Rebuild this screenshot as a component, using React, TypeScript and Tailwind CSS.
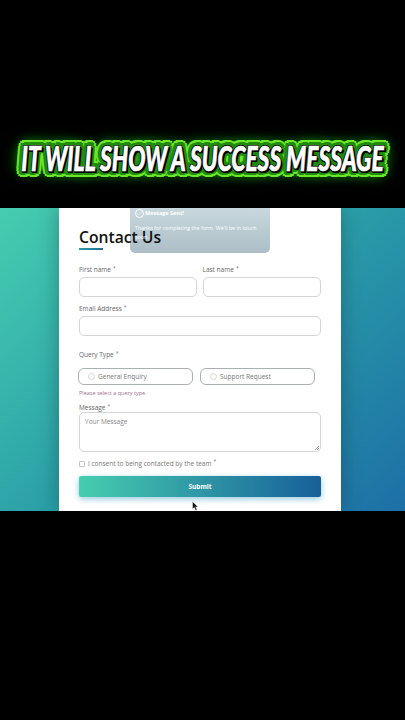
import { Check } from 'lucide-react';

// white letters, black edge, dark green fill, bright ring, then the glow
const OUTLINE =
  '[text-shadow:2px_1px_0_#000,3px_2px_0_#000,-1px_1px_0_#000,1px_-1px_0_#000,-1px_-1px_0_#000,0_2px_0_#000,6px_0_0_#1f8a0c,-6px_0_0_#1f8a0c,5px_3px_0_#1f8a0c,-5px_3px_0_#1f8a0c,5px_-3px_0_#1f8a0c,-5px_-3px_0_#1f8a0c,0_4px_0_#1f8a0c,0_-4px_0_#1f8a0c,3px_-4px_0_#1f8a0c,-3px_4px_0_#1f8a0c,9px_0_0_#6be82a,-9px_0_0_#6be82a,8px_3px_0_#6be82a,-8px_3px_0_#6be82a,8px_-3px_0_#6be82a,-8px_-3px_0_#6be82a,6px_5px_0_#6be82a,-6px_5px_0_#6be82a,6px_-5px_0_#6be82a,-6px_-5px_0_#6be82a,3px_6px_0_#6be82a,-3px_6px_0_#6be82a,3px_-6px_0_#6be82a,-3px_-6px_0_#6be82a,0_6px_0_#6be82a,0_-6px_0_#6be82a,0_0_14px_#39c80f,0_0_18px_#2fa80c,0_0_22px_#2fa80c,0_0_26px_#2fa80c]';

function Req() {
  return <sup className="ml-0.5 text-[5px] text-[#777]">*</sup>;
}

function Label({ children }: { children: React.ReactNode }) {
  return (
    <div className="h-[10px] text-[6.5px] leading-[10px] text-[#666]">
      {children}
      <Req />
    </div>
  );
}

function Field() {
  return <div className="mt-[2px] h-[20px] rounded-[5px] border border-[#d4d6d6] bg-white" />;
}

function Radio({ text }: { text: string }) {
  return (
    <div className="flex h-[17px] w-[115px] items-center rounded-[6px] border border-[#aab0b0] pl-[9px]">
      <span className="h-[7px] w-[7px] rounded-full border border-[#d4d8d8]" />
      <span className="ml-[3px] text-[6.5px] text-[#777]">{text}</span>
    </div>
  );
}

export default function App() {
  return (
    <div className="flex h-[720px] w-[405px] flex-col bg-black font-['Open_Sans',sans-serif]">
      <div className="flex h-[208px] items-end justify-center pb-[34px]">
        <div
          className={`origin-center scale-x-[0.66] whitespace-nowrap font-['Lato',sans-serif] text-[34.5px] leading-[32px] font-black italic text-white [-webkit-text-stroke:0.7px_white] ${OUTLINE}`}
        >
          IT WILL SHOW A SUCCESS MESSAGE
        </div>
      </div>

      <div className="relative flex h-[303px] overflow-hidden bg-[linear-gradient(135deg,#46cdb0_0%,#2a9ea8_50%,#1d6fa6_100%)]">
        <div className="ml-[59px] w-[282px] bg-white px-[20px] pt-[19px] shadow-[0_0_20px_rgba(0,0,0,0.28)]">
          <h1 className="relative z-10 text-[15.7px] leading-[20px] font-semibold text-[#111]">Contact Us</h1>
          <div className="mt-[1px] h-[2px] w-[24px] bg-[linear-gradient(90deg,#2a9ea8,#1d6f96)]" />

          <div className="mt-[15px] flex gap-[6px]">
            <div className="w-[118px]">
              <Label>First name</Label>
              <Field />
            </div>
            <div className="w-[119px]">
              <Label>Last name</Label>
              <Field />
            </div>
          </div>

          <div className="mt-[7px]">
            <Label>Email Address</Label>
            <Field />
          </div>

          <div className="mt-[14px]">
            <Label>Query Type</Label>
          </div>
          <div className="mt-[8px] -ml-px flex gap-[7px]">
            <Radio text="General Enquiry" />
            <Radio text="Support Request" />
          </div>
          <div className="mt-[4px] h-[9px] text-[5.5px] leading-[9px] text-[#a0708a]">Please select a query type.</div>

          <div className="mt-[5px]">
            <Label>Message</Label>
          </div>
          <div className="relative -mt-px h-[40px] rounded-[5px] border border-[#d4d6d6] px-[5px] py-[4px] text-[6.5px] leading-[10px] text-[#888]">
            Your Message
            <svg className="absolute right-px bottom-px h-[4px] w-[4px]" viewBox="0 0 4 4">
              <path d="M0 4 4 0M2 4 4 2" stroke="#555" strokeWidth="0.6" />
            </svg>
          </div>

          <div className="mt-[7px] flex h-[9px] items-center">
            <span className="h-[6px] w-[6px] rounded-[1px] border border-[#c4c8c8]" />
            <span className="ml-[3px] text-[6.5px] text-[#777]">
              I consent to being contacted by the team
              <Req />
            </span>
          </div>

          <div className="mt-[8px] flex h-[21px] items-center justify-center rounded-[2px] bg-[linear-gradient(90deg,#46cdb0,#17609a)] text-[6.5px] font-bold text-white shadow-[0_2px_6px_rgba(40,150,190,0.5)]">
            Submit
          </div>
        </div>

        <div className="absolute top-0 left-[130px] h-[45px] w-[140px] rounded-b-[5px] bg-[linear-gradient(180deg,rgba(197,214,220,0.95),rgba(169,186,195,0.95))] px-[5px] text-white">
          <div className="flex h-[11px] items-center">
            <span className="flex h-[9px] w-[9px] items-center justify-center rounded-full border border-white">
              <Check size={7} strokeWidth={2} />
            </span>
            <span className="ml-[1px] text-[5.5px] font-bold">Message Sent!</span>
          </div>
          <div className="relative z-20 mt-[5px] whitespace-nowrap text-[5.3px] leading-[9px]">
            Thanks for completing the form. We'll be in touch
            <br />
            soon.
          </div>
        </div>

        <svg className="absolute top-[293px] left-[192px] h-[10px] w-[7px]" viewBox="0 0 7 10">
          <path d="M0.5 0.5V8L2.3 6.4 3.6 9.4 5 8.8 3.7 5.9H6Z" fill="#111" stroke="#fff" strokeWidth="0.4" />
        </svg>
      </div>
    </div>
  );
}
